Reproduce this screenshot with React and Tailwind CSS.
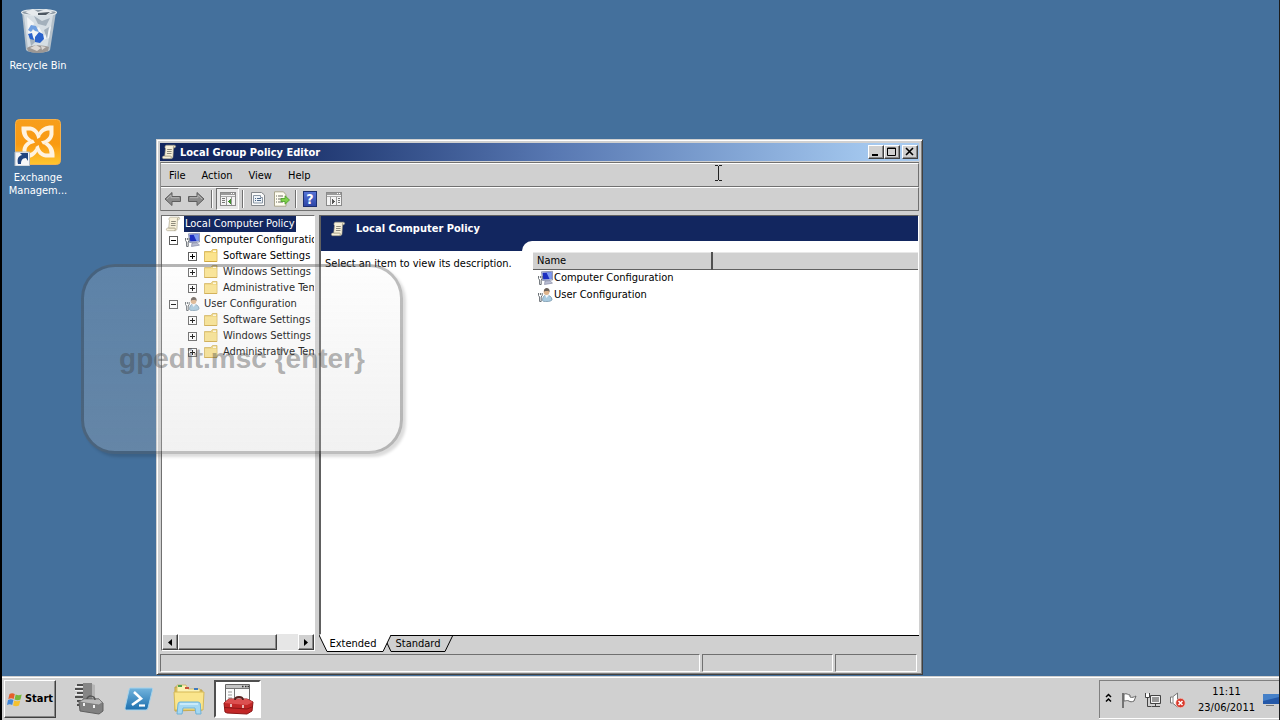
import React from "react";

const sunken = "border border-t-[#707070] border-l-[#707070] border-b-white border-r-white";
const raised =
  "bg-[#d0d0d0] border border-t-white border-l-white border-b-[#404040] border-r-[#404040] shadow-[inset_-1px_-1px_0_#888]";

function ScrollIcon({ className }) {
  return (
    <svg viewBox="0 0 16 16" className={className} aria-hidden="true">
      <path d="M4 3C4 1.500 5 1.200 6 1.200h7.500c1.500 0 1.500 2.400 0 2.600h-1L12 12.500c-.1 1.600-1 2.200-2 2.200H2.500c-1.500 0-1.500-2.400 0-2.600h1.200L4.500 4.500c-.5-.3-.6-.8-.5-1.500z" fill="#f6efd9" stroke="#a39c84" strokeWidth=".6" />
      <path d="M12.300 3.800c.1-1 .5-1.800 1.300-2.300M3.700 12.100h6.200c.7.400.5 1.800-.2 2.400" fill="none" stroke="#8d8468" strokeWidth=".7" />
      <path d="M6.200 5.500h4.600M6 7.500h4.600M5.900 9.500h4.600" stroke="#8e8a7c" strokeWidth="1" />
    </svg>
  );
}

function ComputerIcon({ className }) {
  return (
    <svg viewBox="0 0 16 16" className={className} aria-hidden="true">
      <path d="M4.500 1.800l11-.5v8.700l-10 .5z" fill="#d5d9e6" stroke="#7c86a5" strokeWidth=".8" />
      <path d="M5.500 2.700l9-.4v6.700l-8.300.5z" fill="#1c2fc0" />
      <path d="M9.500 2.500l5-.2v6.700l-2 .1z" fill="#7d9af0" />
      <path d="M8 11l5-.3 2.500 2.500-8 1.300z" fill="#b9bdd2" stroke="#7b7f9c" strokeWidth=".6" />
      <path d="M1.500 6v2.500L2.600 10v4.500h1.600V10l1-1.500V6M3.400 6v2" fill="none" stroke="#6a7075" strokeWidth="1" />
    </svg>
  );
}

function UserIcon({ className }) {
  return (
    <svg viewBox="0 0 16 16" className={className} aria-hidden="true">
      <path d="M5.500 13.500C5.500 9.500 7.500 8 9.500 8s5.500 1.500 5.500 4.500c0 1.500-3 2-5 2s-4.500 0-4.500-1z" fill="#a9cbe0" stroke="#6e8ea5" strokeWidth=".7" />
      <path d="M8 8l1.500 3L12 8z" fill="#f2f6f8" />
      <circle cx="9.500" cy="5" r="2.900" fill="#dfb58c" />
      <path d="M7 4.700C6.500 2 8.500.9 10 1.100c2.300.3 3 2 2.400 4.100L11.300 3.800C9.500 4.200 8 3.700 7 4.700z" fill="#6a6058" />
      <path d="M1.500 6v2.500L2.600 10v4.500h1.600V10l1-1.500V6M3.400 6v2" fill="none" stroke="#6a7075" strokeWidth="1" />
    </svg>
  );
}

function FolderIcon({ className }) {
  return (
    <svg viewBox="0 0 16 16" className={className} aria-hidden="true">
      <path d="M1.500 13.500v-10h6.500l1.500-2h4.500v12z" fill="#f3d675" stroke="#d2b050" strokeWidth=".8" />
      <path d="M2 5h11.500v8H2z" fill="#fbe38c" />
      <path d="M10 2.500h3V4h-3z" fill="#fffbe2" />
      <path d="M1.500 13.500h12.500" stroke="#d0a840" />
    </svg>
  );
}

function Expander({ open, label }) {
  return (
    <button type="button" aria-label={label} aria-expanded={open} className="size-[9px] shrink-0">
      <svg viewBox="0 0 9 9" className="size-[9px]" shapeRendering="crispEdges">
        <rect x=".5" y=".5" width="8" height="8" fill="#fff" stroke="#606060" />
        <path d={open ? "M2 4.500h5" : "M2 4.500h5M4.500 2v5"} stroke="#000" />
      </svg>
    </button>
  );
}

function Group({ label, Icon, items }) {
  return (
    <li>
      <div className="flex h-4 items-center pl-[7px]">
        <Expander open label={`Collapse ${label}`} />
        <Icon className="ml-1.5 size-4 shrink-0" />
        <span className="ml-1 whitespace-nowrap">{label}</span>
      </div>
      <ul>
        {items.map((item) => (
          <li key={item} className="flex h-4 items-center pl-[26px]">
            <Expander open={false} label={`Expand ${item}`} />
            <FolderIcon className="ml-1.5 size-4 shrink-0" />
            <span className="ml-1 whitespace-nowrap">{item}</span>
          </li>
        ))}
      </ul>
    </li>
  );
}

function Arrow({ flip }) {
  return (
    <svg viewBox="0 0 18 16" className={flip ? "h-4 w-[18px] -scale-x-100" : "h-4 w-[18px]"} aria-hidden="true">
      <path d="M1 8l7-6.500v4h8.500v5H8v4z" fill="#8b8b8b" stroke="#5e5e5e" />
      <path d="M3 8l4-3.800v2.500h8" fill="none" stroke="#b4b4b4" />
    </svg>
  );
}

function PaneIcon({ right }) {
  return (
    <svg viewBox="0 0 16 14" className="h-3.5 w-4" aria-hidden="true" shapeRendering="crispEdges">
      <rect x=".5" y=".5" width="15" height="13" fill="#f4f4f4" stroke="#8a8a8a" />
      <path d="M1 1h14v2H1z" fill="#9a9a9a" />
      <path d="M11 1h1v1h-1zM13 1h1v1h-1z" fill="#fff" />
      <path d="M1 4.500h14" stroke="#aaa" />
      {right ? (
        <>
          <path d="M4.500 5v8M10.500 5v8" stroke="#999" />
          <path d="M12 6.500h2M12 8.500h2M12 10.500h2" stroke="#777" />
          <path d="M6 7v5l3-2.500z" fill="#555" />
        </>
      ) : (
        <>
          <path d="M6.500 5v8M11.500 5v8" stroke="#999" />
          <path d="M2 6.500h3M2 8.500h3M2 10.500h3" stroke="#777" />
          <path d="M10.500 7v5L8 9.500z" fill="#3f8e2c" />
        </>
      )}
    </svg>
  );
}

function Separator() {
  return <span className="h-[18px] w-0.5 border-l border-r border-l-[#707070] border-r-white" />;
}

function TitleBar() {
  return (
    <header className="flex h-[18px] items-center bg-linear-to-r from-[#12265f] from-10% via-[#5878b2] via-52% to-[#a6caf0] to-95% pr-px pl-px">
      <ScrollIcon className="size-4" />
      <h1 className="ml-[3px] flex-1 pt-px font-bold text-white">Local Group Policy Editor</h1>
      <div className="flex">
        <button type="button" aria-label="Minimize" className={`h-3.5 w-4 ${raised}`}>
          <svg viewBox="0 0 14 12" className="h-3 w-3.5"><path d="M3 8h6v2H3z" /></svg>
        </button>
        <button type="button" aria-label="Maximize" className={`h-3.5 w-4 ${raised}`}>
          <svg viewBox="0 0 14 12" className="h-3 w-3.5"><path d="M2.500 2h8v7.500h-8zM2 2.500h9" fill="none" stroke="#000" /></svg>
        </button>
        <button type="button" aria-label="Close" className={`ml-0.5 h-3.5 w-4 ${raised}`}>
          <svg viewBox="0 0 14 12" className="h-3 w-3.5"><path d="M3 2l7 7M10 2L3 9" stroke="#000" strokeWidth="1.600" /></svg>
        </button>
      </div>
    </header>
  );
}

function Toolbar() {
  return (
    <div role="toolbar" className="flex h-6 items-center border-t border-r border-b border-t-white border-r-[#707070] border-b-[#707070] pl-[3px]">
      <button type="button" aria-label="Back"><Arrow /></button>
      <button type="button" aria-label="Forward" className="ml-[5px]"><Arrow flip /></button>
      <span className="ml-1.5 flex"><Separator /></span>
      <button type="button" aria-label="Show or hide console tree" className={`ml-[3px] flex h-[22px] w-[23px] items-center justify-center bg-[#e8e8e8] ${sunken}`}>
        <PaneIcon />
      </button>
      <span className="ml-[3px] flex"><Separator /></span>
      <button type="button" aria-label="Properties" className="ml-1.5">
        <svg viewBox="0 0 16 16" className="size-4">
          <path d="M1.500 1.500h10l3 2.500v10.500h-13z" fill="#fafafa" stroke="#84888c" />
          <path d="M3.500 4.500h7v2h2v5.500h-9z" fill="#eef3f8" stroke="#8a97a5" />
          <path d="M5 7.500h1M7 7.500h4M5 9.500h1M7 9.500h4" stroke="#4c6788" />
        </svg>
      </button>
      <button type="button" aria-label="Export list" className="ml-[7px]">
        <svg viewBox="0 0 17 16" className="h-4 w-[17px]">
          <path d="M1.500.8h9l2.500 3v11.400H1.500z" fill="#fffdf0" stroke="#a8a48c" />
          <path d="M3 5h1M5 5h5M3 8h1M5 8h5M3 11h1M5 11h5" stroke="#6c6c66" />
          <path d="M8 7.500h4V4.800l4.500 4.200-4.500 4.200v-2.700H8z" fill="#7fd04c" stroke="#4a9e27" strokeWidth=".8" />
        </svg>
      </button>
      <span className="ml-[5px] flex"><Separator /></span>
      <button type="button" aria-label="Help" className="ml-1.5 flex h-4 w-3.5 items-center justify-center border border-[#1c2f70] bg-linear-to-b from-[#5673d6] to-[#2d46a8] text-sm leading-3 font-bold text-white">?</button>
      <button type="button" aria-label="Show or hide action pane" className="ml-[9px]"><PaneIcon right /></button>
    </div>
  );
}

function ConsoleTree() {
  return (
    <nav aria-label="Console tree" className={`mb-0.5 flex w-[154px] shrink-0 flex-col overflow-hidden bg-white ${sunken} border-t-[#606060]`}>
      <ul className="flex-1">
        <li className="flex h-4 items-center pl-[3px]">
          <ScrollIcon className="size-4 shrink-0" />
          <span className="ml-[3px] bg-[#12265f] px-px leading-4 whitespace-nowrap text-white">Local Computer Policy</span>
        </li>
        <Group label="Computer Configuration" Icon={ComputerIcon} items={["Software Settings", "Windows Settings", "Administrative Templates"]} />
        <Group label="User Configuration" Icon={UserIcon} items={["Software Settings", "Windows Settings", "Administrative Templates"]} />
      </ul>
      <div className="flex h-4 bg-[#e6e6e6]">
        <button type="button" aria-label="Scroll left" className={`flex w-4 items-center justify-center ${raised}`}>
          <svg viewBox="0 0 4 7" className="h-[7px] w-1"><path d="M4 0v7L0 3.500z" /></svg>
        </button>
        <div className={`w-[99px] ${raised}`} />
        <div className="flex-1" />
        <button type="button" aria-label="Scroll right" className={`flex w-4 items-center justify-center ${raised}`}>
          <svg viewBox="0 0 4 7" className="h-[7px] w-1"><path d="M0 0v7l4-3.500z" /></svg>
        </button>
      </div>
    </nav>
  );
}

function DetailsPane() {
  return (
    <section className="flex min-w-0 flex-1 flex-col">
      <div className="flex flex-1 flex-col border-t border-r border-b border-l-2 border-t-[#606060] border-r-white border-b-white border-l-[#606060] bg-white">
        <div className="flex h-[35px] bg-[#12265f]">
          <div className="flex h-[26px] items-center pl-[9px]">
            <ScrollIcon className="size-4" />
            <h2 className="ml-2.5 font-bold text-white">Local Computer Policy</h2>
          </div>
          <div className="ml-[42px] h-2.5 flex-1 self-end rounded-tl-[10px] bg-white" />
        </div>
        <div className="flex flex-1">
          <p className="w-[212px] pt-[5px] pl-1 whitespace-nowrap">Select an item to view its description.</p>
          <div className="flex-1 pt-px">
            <table className="w-full table-fixed border-collapse text-left">
              <colgroup>
                <col className="w-[179px]" />
                <col />
              </colgroup>
              <thead>
                <tr className="h-4 border-t border-b border-t-[#e8e8e8] border-b-[#606060] bg-[#d0d0d0]">
                  <th className="border-r-2 border-r-[#505050] pl-1 font-normal">Name</th>
                  <th aria-label="Spacer" />
                </tr>
              </thead>
              <tbody>
                <tr className="h-[17px]">
                  <td className="pl-1" colSpan={2}>
                    <span className="flex items-center gap-px"><ComputerIcon className="size-4" />Computer Configuration</span>
                  </td>
                </tr>
                <tr className="h-[17px]">
                  <td className="pl-1" colSpan={2}>
                    <span className="flex items-center gap-px"><UserIcon className="size-4" />User Configuration</span>
                  </td>
                </tr>
              </tbody>
            </table>
          </div>
        </div>
      </div>
      <div role="tablist" className="flex h-[18px] border-t border-black">
        <button type="button" role="tab" aria-selected="true" className="relative -mt-px h-[18px] w-[68px]">
          <svg viewBox="0 0 72 18" className="absolute top-0 left-0 h-[18px] w-[72px]">
            <path d="M0 0l8 16.500h56L72 0z" fill="#fff" />
            <path d="M0 0l8 16.500h56L72 0" fill="none" stroke="#000" />
          </svg>
          <span className="relative">Extended</span>
        </button>
        <button type="button" role="tab" aria-selected="false" className="relative -mt-px h-[18px] w-[62px]">
          <svg viewBox="0 0 68 18" className="absolute top-0 left-0 h-[18px] w-[68px]">
            <path d="M0 8l4 8.500h54L66 0" fill="none" stroke="#000" />
          </svg>
          <span className="relative">Standard</span>
        </button>
      </div>
    </section>
  );
}

function PolicyWindow() {
  return (
    <main className="absolute top-[139px] left-[156px] flex h-[536px] w-[767px] flex-col border border-t-[#d0d0d0] border-r-[#404040] border-b-[#404040] border-l-[#d0d0d0] bg-[#d0d0d0] p-[3px] pb-0.5 shadow-[inset_1px_1px_0_#fff,inset_-1px_-1px_0_#808080]">
      <TitleBar />
      <div className="mt-px border-t border-l border-t-[#707070] border-l-[#909090]">
        <nav aria-label="Menu" className="flex h-6 items-center gap-4 border-t border-r border-b border-t-white border-r-[#707070] border-b-[#707070] pt-px pl-2">
          {["File", "Action", "View", "Help"].map((m) => (
            <button key={m} type="button">{m}</button>
          ))}
        </nav>
        <Toolbar />
      </div>
      <div className="mt-1 flex flex-1 gap-1 pl-px">
        <ConsoleTree />
        <DetailsPane />
      </div>
      <footer className="mt-px flex h-[18px] gap-0.5">
        <div className={`flex-1 ${sunken}`} />
        <div className={`w-[131px] ${sunken}`} />
        <div className={`mr-0.5 w-[82px] ${sunken}`} />
      </footer>
    </main>
  );
}

function ExchangeIcon() {
  return (
    <svg viewBox="0 0 48 48" className="size-12" aria-hidden="true">
      <defs>
        <linearGradient id="orange" x1="0" y1="0" x2="0" y2="1">
          <stop offset="0" stopColor="#f79e1c" />
          <stop offset=".55" stopColor="#f99a12" />
          <stop offset="1" stopColor="#ffc62e" />
        </linearGradient>
        <path id="petal" d="M7.500 8.500h9C22 9.500 25 13 26.500 19l-3.200 2C22.500 16.500 20 13 16 12.500h-3.500c0 4 1.500 7 5.500 9l-3 2.200C9.500 21 7 16 7.500 8.500z" />
      </defs>
      <rect x="1.500" y="1.500" width="45" height="45" rx="4" fill="url(#orange)" stroke="#f6b04a" />
      <g fill="#fff3e0">
        <use href="#petal" />
        <use href="#petal" transform="rotate(90 24 24)" />
        <use href="#petal" transform="rotate(180 24 24)" />
        <use href="#petal" transform="rotate(270 24 24)" />
      </g>
      <path d="M1 34h14.500v14H1z" fill="#f6f7f8" stroke="#b5bcc4" />
      <path d="M4 46c-1-5 0-8 4-9l-2-2h8v8l-2-3c-4 0-5 3-5 6z" fill="#21447f" />
    </svg>
  );
}

function DesktopIcons() {
  return (
    <div className="flex w-[72px] flex-col items-center text-center text-white">
      <a href="#recycle-bin" className="flex flex-col items-center pt-2">
        <svg viewBox="0 0 40 48" className="h-12 w-10" aria-hidden="true">
          <path d="M4 4l4 38c2 3.500 22 3.500 24 0l6-38z" fill="#b4c0ca" />
          <path d="M6 7l4 34c5 3 15 3 19 0l6-34z" fill="#d6dee4" />
          <path d="M9 9l7 6-2 8 7-4 5 9 7-10-2 12-9 3-12-5z" fill="#f1f4f6" />
          <path d="M16 8l8 5 8-3-4 8-8-2zM26 22l5-3-2 12zM11 26l2 12 5-5z" fill="#a3b0bc" />
          <path d="M9 40c5-4 16-3 22-1l-1 4c-5 2.500-16 2.500-20 0z" fill="#9c9794" />
          <path d="M12 40l6-3 5 3-4 3zM23 38l5 1-4 3z" fill="#dcd8d4" />
          <ellipse cx="21" cy="4.500" rx="17.500" ry="3" fill="#8d99a4" stroke="#dfe6ea" strokeWidth="1.200" />
          <path d="M7 4l8-3 5 3 8-3 7 3-6 3H13z" fill="#e6eaed" />
          <path d="M20 5l12-1-4 3h-8z" fill="#4d5761" />
          <path d="M10 22l3-5 5 1 3 6-4-1-2-2-2 3z" fill="#6f9fe0" />
          <path d="M10 26l4-1 1 4 1 3-4-1zM17 29l4-5 4 2 1 5-4 4-5-1z" fill="#2a63cc" />
        </svg>
        <span className="mt-[3px] leading-[13px]">Recycle Bin</span>
      </a>
      <a href="#exchange" className="mt-[46px] flex flex-col items-center">
        <ExchangeIcon />
        <span className="mt-[5px] leading-[13px]">Exchange<br />Managem...</span>
      </a>
    </div>
  );
}

function KeystrokeCallout() {
  return (
    <aside className="absolute top-[264px] left-[81px] flex h-[190px] w-[322px] items-center justify-center rounded-[34px] border-[3px] border-black/25 bg-linear-to-b from-[#f0f0f0]/15 to-[#c8c8c8]/25 shadow-[3px_3px_3px_rgba(0,0,0,0.14)]">
      <p className="font-['Liberation_Sans',Arial,sans-serif] text-[28px] leading-8 font-bold text-[#404040]/40">gpedit.msc {"{enter}"}</p>
    </aside>
  );
}

function IBeam() {
  return (
    <svg viewBox="0 0 7 16" className="absolute top-[165px] left-[715px] h-4 w-[7px]" shapeRendering="crispEdges" aria-hidden="true">
      <path d="M0 0h3v1H0zM4 0h3v1H4zM3 1h1v14H3zM0 15h3v1H0zM4 15h3v1H4z" fill="#222" />
    </svg>
  );
}

function Taskbar() {
  return (
    <footer className="flex h-11 items-stretch border-t border-[#d0d0d0] bg-[#d0d0d0] pb-0.5 pl-0.5 shadow-[inset_0_1px_0_#fff]">
      <button type="button" className={`mt-[3px] flex w-[52px] items-center justify-center gap-0.5 font-bold ${raised}`}>
        <svg viewBox="0 0 16 15" className="h-[15px] w-4" aria-hidden="true">
          <path d="M2.500 2C4.500.8 6 1 7.800 2L6.700 7C5 6 3.500 6 1.300 7z" fill="#e5602a" />
          <path d="M8.700 2.500c2 1 3.800 1 6 0L13.500 7.500c-2 1-4 1-6 0z" fill="#77b83c" />
          <path d="M1 8c2-1 3.600-1 5.400 0l-1.200 5C3.500 12 2 12 0 13z" fill="#3f85d8" />
          <path d="M7.300 8.500c2 1 3.800 1 6 0L12 13.500c-2 1-4 1-6 0z" fill="#f5c12e" />
        </svg>
        Start
      </button>
      <div className="mt-0.5 ml-[17px] flex flex-1 items-center">
        <button type="button" aria-label="Server Manager">
          <svg viewBox="0 0 32 34" className="h-[34px] w-8">
            <path d="M10 1h9v26h-9z" fill="#858585" />
            <path d="M19 2l3 1v14h-3z" fill="#b5b5b5" />
            <path d="M4 2h6v2H4zM2 6h8v2H2zM4 10h6v2H4zM2 14h8v2H2zM4 18h6v2H4zM4 22h6v2H4z" fill="#4d4d4d" />
            <path d="M2 4h8v1H2zM2 8h8v1H2zM2 12h8v1H2z" fill="#ececec" />
            <path d="M6 20l5-3h15l4 4v8l-4 3-19-3z" fill="#808080" stroke="#606060" />
            <path d="M6 20l20 3 4-3M6 20l5-3h15l3 3" fill="#b9b9b9" stroke="#777" strokeWidth=".8" />
            <path d="M14 17c0-4 8-4 8 1" fill="none" stroke="#555" strokeWidth="1.500" />
            <path d="M11 21v3M21 23v3" stroke="#f1f1f1" strokeWidth="2" />
          </svg>
        </button>
        <button type="button" aria-label="PowerShell" className="ml-[19px]">
          <svg viewBox="0 0 30 28" className="h-7 w-[30px]">
            <defs>
              <linearGradient id="ps" x1="0" y1="0" x2="0" y2="1">
                <stop offset="0" stopColor="#73b4dd" /><stop offset="1" stopColor="#1c6fae" />
              </linearGradient>
            </defs>
            <path d="M6 3h21.500q1.500 0 1 2l-4.500 18q-.5 2-2 2H2.500q-2 0-1.500-2L5 5q.5-2 1-2z" fill="url(#ps)" stroke="#a6d3ec" />
            <path d="M10 7l7 6.500L8 20" fill="none" stroke="#fff" strokeWidth="2.600" />
            <path d="M15 20.500h6" stroke="#fff" strokeWidth="2.200" />
          </svg>
        </button>
        <button type="button" aria-label="Windows Explorer" className="ml-[18px]">
          <svg viewBox="0 0 34 32" className="h-8 w-[34px]">
            <path d="M3 28V4h10l2 3h15v20z" fill="#e8ca63" stroke="#bda045" />
            <path d="M5 4V2h9l2 4h12v4H5z" fill="#fcf2b4" stroke="#c6ac58" strokeWidth=".7" />
            <path d="M6 2h4v2H6z" fill="#4fa34b" /><path d="M13 4h4v2h-4z" fill="#c85139" /><path d="M22 5h4v2h-4z" fill="#3f79be" />
            <path d="M2 9h30l-1 18H3z" fill="#fae58c" stroke="#d5b957" />
            <path d="M5 31l1-10q.3-2 2-2h18q2 0 2.300 2L29 31h-5l-1-6H11l-1 6z" fill="#a5d8f2" stroke="#6fb2d8" />
            <path d="M8 21h18" stroke="#d6f0fd" strokeWidth="1.500" />
          </svg>
        </button>
        <button type="button" aria-label="Local Group Policy Editor" aria-pressed="true" className="ml-2 flex h-[38px] w-[47px] items-center justify-center border-2 border-t-[#505050] border-r-white border-b-white border-l-[#505050] bg-white">
          <svg viewBox="0 0 34 34" className="size-[34px]">
            <path d="M4.500 2.500h24v23h-24z" fill="#fbfbfb" stroke="#666" />
            <path d="M5 3h23v3H5z" fill="#c4c4c4" /><path d="M5 6.500h23M13.500 7v18" stroke="#777" />
            <path d="M21 4.500h1.500M24 4.500h1.500M26.500 4.500H28" stroke="#333" strokeWidth="1.500" />
            <path d="M7 10h4M7 13h4M7 16h4" stroke="#999" />
            <path d="M3 21l5-4h18l6 3-1 9-5 3-20-1-2-1z" fill="#c22727" stroke="#8b1616" />
            <path d="M3 21l5-4h18l6 3-6 3z" fill="#dc5050" />
            <path d="M14 18c0-4 8-4 8 0" fill="none" stroke="#57201e" strokeWidth="1.800" />
            <path d="M10 22v3M22 23v3" stroke="#f1dcd8" strokeWidth="1.600" />
            <path d="M4 25.500l22 1.500 5-2" fill="none" stroke="#8d1717" />
          </svg>
        </button>
      </div>
      <div className="mt-[3px] flex items-center border-t border-l border-t-[#808080] border-l-[#808080] pl-[5px] shadow-[0_1px_0_#fff]">
        <button type="button" aria-label="Show hidden icons" className="pb-1">
          <svg viewBox="0 0 7 10" className="h-2.5 w-[7px]"><path d="M1 4l2.500-2.500L6 4M1 8.500L3.500 6 6 8.500" fill="none" stroke="#000" strokeWidth="1.500" /></svg>
        </button>
        <button type="button" aria-label="Action Center" className="ml-[9px]">
          <svg viewBox="0 0 16 16" className="size-4"><path d="M2 1v15" stroke="#555" strokeWidth="1.500" /><path d="M3 2c3-1 4 1 6 1v2c2 1 4 0 6-1l-2 5c-2 1-4 1-5 0-2-1-3 0-5 0z" fill="#fff" stroke="#666" /></svg>
        </button>
        <button type="button" aria-label="Network" className="ml-2">
          <svg viewBox="0 0 17 16" className="h-4 w-[17px]">
            <path d="M5.500 3.500h10v8h-10z" fill="#999" stroke="#444" /><path d="M6.500 4.500h8v6h-8z" fill="none" stroke="#f4f4f4" />
            <path d="M7 14.500h8M10.500 12v2" stroke="#444" />
            <path d="M.5 1v4.500h4V1M2.500 5v9.500h4" fill="none" stroke="#444" /><path d="M1 1.500h3V5H1z" fill="#fff" />
          </svg>
        </button>
        <button type="button" aria-label="Volume muted" className="ml-[7px]">
          <svg viewBox="0 0 17 16" className="h-4 w-[17px]">
            <path d="M1.500 5v6h2l5 4V1l-5 4z" fill="#fff" stroke="#777" /><path d="M4 5v6" stroke="#888" />
            <circle cx="11.500" cy="11" r="4.700" fill="#d8392c" stroke="#f4c7c0" strokeWidth=".7" /><path d="M9.500 9l4 4M13.500 9l-4 4" stroke="#fff" strokeWidth="1.500" />
          </svg>
        </button>
        <time dateTime="2011-06-23T11:11" className="ml-3 text-center leading-4">11:11<br />23/06/2011</time>
        <button type="button" aria-label="Show desktop" className="ml-2">
          <svg viewBox="0 0 16 14" className="h-3.5 w-4"><path d="M0 1h16v10H0z" fill="#2458a8" /><path d="M0 1h16v3L0 8z" fill="#4580c8" /><path d="M3 12h8v1H3z" fill="#777" /></svg>
        </button>
      </div>
    </footer>
  );
}

export default function App() {
  return (
    <div className="relative flex min-h-screen flex-col overflow-hidden border-r border-l-2 border-r-[#1c1c1c] border-l-black bg-[#44709c] font-['DejaVu_Sans_Condensed','DejaVu_Sans',Tahoma,sans-serif] text-[11px] leading-4 text-black">
      <div className="flex-1">
        <DesktopIcons />
      </div>
      <Taskbar />
      <div className="absolute inset-y-0 -left-0.5">
        <PolicyWindow />
        <KeystrokeCallout />
        <IBeam />
      </div>
    </div>
  );
}
